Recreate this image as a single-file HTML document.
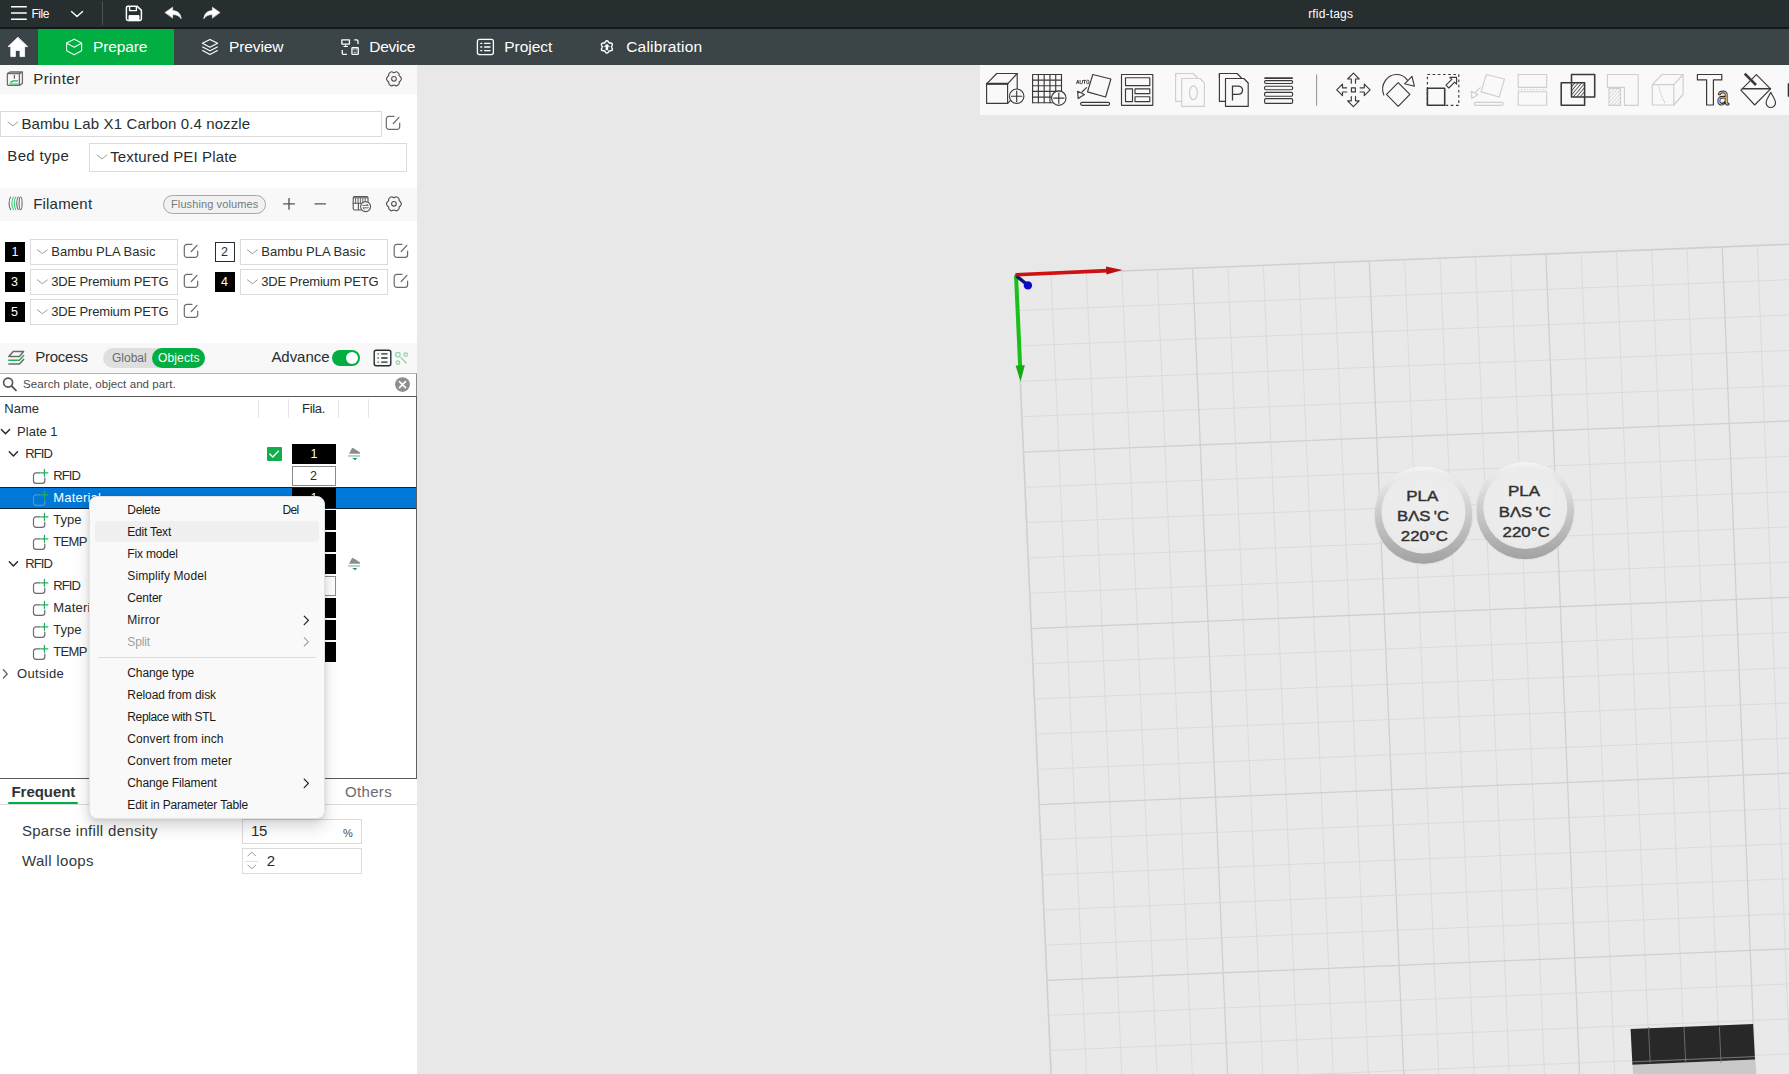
<!DOCTYPE html>
<html><head><meta charset="utf-8"><title>Bambu Studio</title>
<style>
html,body{margin:0;padding:0;background:#fff;}
body{width:1789px;height:1074px;overflow:hidden;font-family:"Liberation Sans",sans-serif;}
#root{position:relative;width:1789px;height:1074px;overflow:hidden;background:#fff;}
.a{position:absolute;box-sizing:border-box;}
.t{position:absolute;white-space:pre;font-family:"Liberation Sans",sans-serif;}
svg{position:absolute;left:0;top:0;overflow:visible;}
.combo{position:absolute;box-sizing:border-box;border:1px solid #DBDBDB;background:#fff;}
.blk{position:absolute;background:#000;}
.wbx{position:absolute;box-sizing:border-box;background:#fff;border:1px solid #8A8A8A;}

</style></head>
<body>
<div id="root">
<!-- title bar -->
<div class="a" style="left:0;top:0;width:1789px;height:28px;background:#262E30"></div>
<div class="a" style="left:0;top:27px;width:1789px;height:1.5px;background:#14181A"></div>
<!-- tab bar -->
<div class="a" style="left:0;top:28.5px;width:1789px;height:36.5px;background:#3B4446"></div>
<div class="a" style="left:38px;top:28.5px;width:136px;height:36.5px;background:#00AE42"></div>
<!-- left panel -->
<div class="a" style="left:0;top:65px;width:417px;height:1009px;background:#fff"></div>
<div class="a" style="left:0;top:65px;width:417px;height:29px;background:#F8F8F8"></div>
<div class="a" style="left:0;top:188px;width:417px;height:32.5px;background:#F8F8F8"></div>
<div class="a" style="left:0;top:342.5px;width:417px;height:31px;background:#F8F8F8"></div>
<!-- printer combo -->
<div class="combo" style="left:0;top:111px;width:381.5px;height:25.5px"></div>
<div class="combo" style="left:89px;top:142.5px;width:317.5px;height:29px"></div>
<!-- flushing volumes -->
<div class="a" style="left:163px;top:195px;width:103px;height:18.5px;border:1px solid #A8A8A8;border-radius:9.5px;background:#F1F1F1"></div>
<!-- filament combos -->
<div class="combo" style="left:30px;top:239px;width:147.5px;height:25.5px"></div>
<div class="combo" style="left:240px;top:239px;width:147.5px;height:25.5px"></div>
<div class="combo" style="left:30px;top:269px;width:147.5px;height:25.5px"></div>
<div class="combo" style="left:240px;top:269px;width:147.5px;height:25.5px"></div>
<div class="combo" style="left:30px;top:299px;width:147.5px;height:25.5px"></div>
<!-- colour boxes -->
<div class="blk" style="left:5px;top:242px;width:20px;height:20px"></div>
<div class="wbx" style="left:215px;top:242px;width:20px;height:20px;border-color:#262E30"></div>
<div class="blk" style="left:5px;top:272px;width:20px;height:20px"></div>
<div class="blk" style="left:215px;top:272px;width:20px;height:20px"></div>
<div class="blk" style="left:5px;top:302px;width:20px;height:20px"></div>
<!-- process toggle -->
<div class="a" style="left:102.5px;top:347.5px;width:102.5px;height:20.5px;border-radius:10.5px;background:#DFDFDF"></div>
<div class="a" style="left:152px;top:347.5px;width:53px;height:20.5px;border-radius:10.5px;background:#00AE42"></div>
<!-- advance switch -->
<div class="a" style="left:332px;top:350px;width:27.5px;height:15.5px;border-radius:8px;background:#00AE42"></div>
<div class="a" style="left:345.5px;top:351.5px;width:12.5px;height:12.5px;border-radius:6.5px;background:#fff"></div>
<!-- search box -->
<div class="a" style="left:0;top:373px;width:417px;height:23.5px;background:#fff;border-top:1px solid #B4B4B4;border-right:1px solid #8C8C8C"></div>
<!-- object list -->
<div class="a" style="left:0;top:395.5px;width:417px;height:383.5px;background:#fff;border-top:1.5px solid #5A5A5A;border-right:1px solid #606060;border-bottom:1px solid #5A5A5A"></div>
<div class="a" style="left:258px;top:399px;width:1px;height:19px;background:#E6E6E6"></div>
<div class="a" style="left:288px;top:399px;width:1px;height:19px;background:#E6E6E6"></div>
<div class="a" style="left:338px;top:399px;width:1px;height:19px;background:#E6E6E6"></div>
<div class="a" style="left:368px;top:399px;width:1px;height:19px;background:#E6E6E6"></div>
<!-- selected row -->
<div class="a" style="left:0;top:487px;width:416px;height:22px;background:#0078D7;border-top:1px solid #10243A;border-bottom:1px solid #10243A"></div>
<!-- filament column boxes -->
<div class="blk" style="left:292px;top:444px;width:44px;height:20px"></div>
<div class="wbx" style="left:292px;top:466px;width:44px;height:20px"></div>
<div class="blk" style="left:292px;top:488px;width:44px;height:20px"></div>
<div class="blk" style="left:292px;top:510px;width:44px;height:20px"></div>
<div class="blk" style="left:292px;top:532px;width:44px;height:20px"></div>
<div class="blk" style="left:292px;top:554px;width:44px;height:20px"></div>
<div class="wbx" style="left:292px;top:576px;width:44px;height:20px"></div>
<div class="blk" style="left:292px;top:598px;width:44px;height:20px"></div>
<div class="blk" style="left:292px;top:620px;width:44px;height:20px"></div>
<div class="blk" style="left:292px;top:642px;width:44px;height:20px"></div>
<!-- checkbox -->
<div class="a" style="left:266.5px;top:446.5px;width:15px;height:14.5px;background:#12AE4B;border-radius:1px"></div>
<!-- bottom tabs -->
<div class="a" style="left:0;top:803.5px;width:417px;height:1px;background:#DADADA"></div>
<div class="a" style="left:8px;top:801.5px;width:70px;height:2px;background:#00AE42;border-radius:1px"></div>
<!-- inputs -->
<div class="combo" style="left:242px;top:818.5px;width:120px;height:25.5px"></div>
<div class="combo" style="left:242px;top:848px;width:120px;height:25.5px"></div>

<div class="a" style="left:417px;top:65px;width:1372px;height:1009px;background:#E8E8E8"></div>
<svg width="1789" height="1074" viewBox="0 0 1789 1074" style="left:0;top:0">
<defs><clipPath id="vp"><rect x="417" y="65" width="1372" height="1009"/></clipPath>
<linearGradient id="ring" x1="0" y1="0" x2="0" y2="1"><stop offset="0" stop-color="#F6F6F6"/><stop offset="0.3" stop-color="#DADADA"/><stop offset="0.6" stop-color="#BEBEBE"/><stop offset="1" stop-color="#9A9A9A"/></linearGradient>
<radialGradient id="face" cx="0.5" cy="0.45" r="0.6"><stop offset="0" stop-color="#EFEFEF"/><stop offset="0.8" stop-color="#ECECEC"/><stop offset="1" stop-color="#E2E2E2"/></radialGradient>
</defs><g clip-path="url(#vp)">
<polygon points="1015.6,275.2 1919.4,239.1 1954.1,1137.8 1055.7,1176.6" fill="#E9E9E9"/>
<line x1="1015.6" y1="275.2" x2="1055.7" y2="1176.6" stroke="#CFCFCF" stroke-width="1.6"/>
<line x1="1015.6" y1="275.2" x2="1919.4" y2="239.1" stroke="#CFCFCF" stroke-width="1.6"/>
<line x1="1051.0" y1="273.8" x2="1090.9" y2="1175.1" stroke="#D9D9D9" stroke-width="0.9"/>
<line x1="1017.2" y1="310.6" x2="1920.7" y2="274.4" stroke="#D9D9D9" stroke-width="0.9"/>
<line x1="1086.4" y1="272.4" x2="1126.1" y2="1173.5" stroke="#D9D9D9" stroke-width="0.9"/>
<line x1="1018.8" y1="346.0" x2="1922.1" y2="309.7" stroke="#D9D9D9" stroke-width="0.9"/>
<line x1="1121.8" y1="271.0" x2="1161.3" y2="1172.0" stroke="#D9D9D9" stroke-width="0.9"/>
<line x1="1020.3" y1="381.4" x2="1923.4" y2="345.0" stroke="#D9D9D9" stroke-width="0.9"/>
<line x1="1157.2" y1="269.5" x2="1196.5" y2="1170.5" stroke="#D9D9D9" stroke-width="0.9"/>
<line x1="1021.9" y1="416.7" x2="1924.8" y2="380.2" stroke="#D9D9D9" stroke-width="0.9"/>
<line x1="1192.6" y1="268.1" x2="1231.7" y2="1169.0" stroke="#D0D0D0" stroke-width="1.3"/>
<line x1="1023.5" y1="452.1" x2="1926.2" y2="415.4" stroke="#D0D0D0" stroke-width="1.3"/>
<line x1="1227.9" y1="266.7" x2="1266.8" y2="1167.5" stroke="#D9D9D9" stroke-width="0.9"/>
<line x1="1025.1" y1="487.4" x2="1927.5" y2="450.7" stroke="#D9D9D9" stroke-width="0.9"/>
<line x1="1263.3" y1="265.3" x2="1302.0" y2="1165.9" stroke="#D9D9D9" stroke-width="0.9"/>
<line x1="1026.6" y1="522.7" x2="1928.9" y2="485.9" stroke="#D9D9D9" stroke-width="0.9"/>
<line x1="1298.7" y1="263.9" x2="1337.1" y2="1164.4" stroke="#D9D9D9" stroke-width="0.9"/>
<line x1="1028.2" y1="558.0" x2="1930.3" y2="521.1" stroke="#D9D9D9" stroke-width="0.9"/>
<line x1="1334.0" y1="262.5" x2="1372.2" y2="1162.9" stroke="#D9D9D9" stroke-width="0.9"/>
<line x1="1029.8" y1="593.3" x2="1931.6" y2="556.2" stroke="#D9D9D9" stroke-width="0.9"/>
<line x1="1369.3" y1="261.1" x2="1407.4" y2="1161.4" stroke="#D0D0D0" stroke-width="1.3"/>
<line x1="1031.3" y1="628.6" x2="1933.0" y2="591.4" stroke="#D0D0D0" stroke-width="1.3"/>
<line x1="1404.6" y1="259.7" x2="1442.5" y2="1159.9" stroke="#D9D9D9" stroke-width="0.9"/>
<line x1="1032.9" y1="663.8" x2="1934.3" y2="626.5" stroke="#D9D9D9" stroke-width="0.9"/>
<line x1="1440.0" y1="258.2" x2="1477.6" y2="1158.4" stroke="#D9D9D9" stroke-width="0.9"/>
<line x1="1034.5" y1="699.0" x2="1935.7" y2="661.7" stroke="#D9D9D9" stroke-width="0.9"/>
<line x1="1475.3" y1="256.8" x2="1512.7" y2="1156.8" stroke="#D9D9D9" stroke-width="0.9"/>
<line x1="1036.0" y1="734.2" x2="1937.1" y2="696.8" stroke="#D9D9D9" stroke-width="0.9"/>
<line x1="1510.6" y1="255.4" x2="1547.8" y2="1155.3" stroke="#D9D9D9" stroke-width="0.9"/>
<line x1="1037.6" y1="769.4" x2="1938.4" y2="731.9" stroke="#D9D9D9" stroke-width="0.9"/>
<line x1="1545.9" y1="254.0" x2="1582.8" y2="1153.8" stroke="#D0D0D0" stroke-width="1.3"/>
<line x1="1039.2" y1="804.6" x2="1939.8" y2="766.9" stroke="#D0D0D0" stroke-width="1.3"/>
<line x1="1581.1" y1="252.6" x2="1617.9" y2="1152.3" stroke="#D9D9D9" stroke-width="0.9"/>
<line x1="1040.7" y1="839.8" x2="1941.1" y2="802.0" stroke="#D9D9D9" stroke-width="0.9"/>
<line x1="1616.4" y1="251.2" x2="1653.0" y2="1150.8" stroke="#D9D9D9" stroke-width="0.9"/>
<line x1="1042.3" y1="874.9" x2="1942.5" y2="837.1" stroke="#D9D9D9" stroke-width="0.9"/>
<line x1="1651.7" y1="249.8" x2="1688.0" y2="1149.3" stroke="#D9D9D9" stroke-width="0.9"/>
<line x1="1043.9" y1="910.1" x2="1943.8" y2="872.1" stroke="#D9D9D9" stroke-width="0.9"/>
<line x1="1686.9" y1="248.4" x2="1723.1" y2="1147.8" stroke="#D9D9D9" stroke-width="0.9"/>
<line x1="1045.4" y1="945.2" x2="1945.2" y2="907.1" stroke="#D9D9D9" stroke-width="0.9"/>
<line x1="1722.2" y1="247.0" x2="1758.1" y2="1146.3" stroke="#D0D0D0" stroke-width="1.3"/>
<line x1="1047.0" y1="980.3" x2="1946.5" y2="942.1" stroke="#D0D0D0" stroke-width="1.3"/>
<line x1="1757.4" y1="245.6" x2="1793.1" y2="1144.7" stroke="#D9D9D9" stroke-width="0.9"/>
<line x1="1048.6" y1="1015.4" x2="1947.9" y2="977.1" stroke="#D9D9D9" stroke-width="0.9"/>
<line x1="1792.6" y1="244.2" x2="1828.1" y2="1143.2" stroke="#D9D9D9" stroke-width="0.9"/>
<line x1="1050.1" y1="1050.5" x2="1949.2" y2="1012.0" stroke="#D9D9D9" stroke-width="0.9"/>
<line x1="1827.8" y1="242.8" x2="1863.1" y2="1141.7" stroke="#D9D9D9" stroke-width="0.9"/>
<line x1="1051.7" y1="1085.5" x2="1950.6" y2="1047.0" stroke="#D9D9D9" stroke-width="0.9"/>
<line x1="1863.0" y1="241.3" x2="1898.1" y2="1140.2" stroke="#D9D9D9" stroke-width="0.9"/>
<line x1="1053.2" y1="1120.5" x2="1952.0" y2="1081.9" stroke="#D9D9D9" stroke-width="0.9"/>
<line x1="1898.2" y1="239.9" x2="1933.1" y2="1138.7" stroke="#D0D0D0" stroke-width="1.3"/>
<line x1="1054.8" y1="1155.6" x2="1953.3" y2="1116.8" stroke="#D0D0D0" stroke-width="1.3"/>
<polygon points="1632.4,1064.7 1755,1059.6 1757,1080 1633.5,1080" fill="#C9C9C9"/>
<polygon points="1630.6,1029.1 1753.1,1023.9 1755,1059.6 1632.4,1064.7" fill="#282828"/>
<line x1="1632" y1="1061.8" x2="1755" y2="1056.6" stroke="#8C8C8C" stroke-width="0.8"/>
<line x1="1648.5" y1="1027" x2="1650.2" y2="1063" stroke="#7A7A7A" stroke-width="0.8"/>
<line x1="1684.0" y1="1027" x2="1685.7" y2="1063" stroke="#7A7A7A" stroke-width="0.8"/>
<line x1="1719.4" y1="1027" x2="1721.0" y2="1063" stroke="#7A7A7A" stroke-width="0.8"/>
<g opacity="0.9"><circle cx="1423.5" cy="515.0" r="49.3" fill="url(#ring)"/>
<circle cx="1423.5" cy="515.0" r="49.3" fill="none" stroke="#E4E4E4" stroke-width="1"/>
<ellipse cx="1423.5" cy="512.3" rx="42" ry="41.2" fill="url(#face)"/>
<text x="1422.2" y="500.5" font-size="15" font-family='"Liberation Sans", sans-serif' font-weight="400" fill="#1C1C1C" stroke="#1C1C1C" stroke-width="0.45" text-anchor="middle" textLength="32" lengthAdjust="spacingAndGlyphs">PLA</text>
<text x="1423.0" y="521.0" font-size="15" font-family='"Liberation Sans", sans-serif' font-weight="400" fill="#1C1C1C" stroke="#1C1C1C" stroke-width="0.45" text-anchor="middle" textLength="52" lengthAdjust="spacingAndGlyphs">B&#923;S&#8201;'C</text>
<text x="1424.3" y="541.0" font-size="15" font-family='"Liberation Sans", sans-serif' font-weight="400" fill="#1C1C1C" stroke="#1C1C1C" stroke-width="0.45" text-anchor="middle" textLength="47" lengthAdjust="spacingAndGlyphs">220&#176;C</text></g>
<g opacity="0.9"><circle cx="1525.3" cy="510.5" r="49.3" fill="url(#ring)"/>
<circle cx="1525.3" cy="510.5" r="49.3" fill="none" stroke="#E4E4E4" stroke-width="1"/>
<ellipse cx="1525.3" cy="507.8" rx="42" ry="41.2" fill="url(#face)"/>
<text x="1524.0" y="496.0" font-size="15" font-family='"Liberation Sans", sans-serif' font-weight="400" fill="#1C1C1C" stroke="#1C1C1C" stroke-width="0.45" text-anchor="middle" textLength="32" lengthAdjust="spacingAndGlyphs">PLA</text>
<text x="1524.8" y="516.5" font-size="15" font-family='"Liberation Sans", sans-serif' font-weight="400" fill="#1C1C1C" stroke="#1C1C1C" stroke-width="0.45" text-anchor="middle" textLength="52" lengthAdjust="spacingAndGlyphs">B&#923;S&#8201;'C</text>
<text x="1526.1" y="536.5" font-size="15" font-family='"Liberation Sans", sans-serif' font-weight="400" fill="#1C1C1C" stroke="#1C1C1C" stroke-width="0.45" text-anchor="middle" textLength="47" lengthAdjust="spacingAndGlyphs">220&#176;C</text></g>
<line x1="1016" y1="275" x2="1020.2" y2="367" stroke="#18C018" stroke-width="4"/>
<polygon points="1015.6,365.5 1024.8,365.2 1020.6,381.5" fill="#14A814"/>
<line x1="1016.5" y1="276" x2="1027" y2="284.5" stroke="#10107A" stroke-width="3.5"/>
<circle cx="1027.9" cy="285.4" r="4.2" fill="#0A0AC8"/>
<line x1="1015.4" y1="274.8" x2="1108" y2="270.6" stroke="#CC1212" stroke-width="3.6"/>
<polygon points="1106,266.6 1122.5,270 1106.4,274.6" fill="#B81010"/>
</g></svg>
<div class="a" style="left:980px;top:65px;width:809px;height:49.6px;background:#F9F9F9"></div>
<svg id="icons" width="1789" height="1074" viewBox="0 0 1789 1074" fill="none" stroke-linecap="round" stroke-linejoin="round">
<!-- ===== title bar ===== -->
<g stroke="#fff" stroke-width="1.6" stroke-linecap="butt">
<path d="M11 6.7H26.8M11 13H26.8M11 19.2H26.8"/>
</g>
<path d="M71.5 11.6L77 16.6L82.6 11.6" stroke="#fff" stroke-width="1.4"/>
<path d="M102.5 2V25" stroke="#4A5254" stroke-width="1"/>
<!-- save -->
<path d="M128 6.2H137.2L141.4 10.4V18.8A1.6 1.6 0 0 1 139.8 20.4H128A1.6 1.6 0 0 1 126.4 18.8V7.8A1.6 1.6 0 0 1 128 6.2Z" stroke="#fff" stroke-width="1.5"/>
<path d="M129.6 6.6V10.6H136.4V6.6" stroke="#fff" stroke-width="1.4"/>
<path d="M129 20.2V15.6H139V20.2Z" fill="#fff" stroke="#fff" stroke-width="1"/>
<!-- undo -->
<path d="M165.2 12.4L172.6 7.2V10.6C177.6 10.8 180.8 13.8 181.2 18.8C179.2 16 176.6 14.6 172.6 14.6V17.8Z" fill="#fff" stroke="#fff" stroke-width="0.6"/>
<!-- redo -->
<path d="M219.8 12.4L212.4 7.2V10.6C207.4 10.8 204.2 13.8 203.8 18.8C205.800 16 208.4 14.6 212.4 14.6V17.8Z" fill="#fff" stroke="#fff" stroke-width="0.6"/>
<!-- ===== tab bar ===== -->
<!-- home -->
<path d="M17.7 37.4L8 46.6H10.8V56.6H15.4V50.4H20V56.6H24.6V46.6H27.4Z" fill="#fff" stroke="#fff" stroke-width="0.8"/>
<!-- prepare cube -->
<g stroke="#E8FFE8" stroke-width="1.15">
<path d="M74.2 39.2L81.6 43V50.8L74.2 54.8L66.6 50.8V43Z"/>
<path d="M66.8 43.2L74.2 47.2L81.4 43.2"/>
</g>
<!-- preview layers -->
<g stroke="#fff" stroke-width="1.15">
<path d="M210 39.4L217.6 43.2L210 47.2L202.4 43.2Z"/>
<path d="M202.600 47L210 50.800L217.400 47"/>
<path d="M202.600 50.6L210 54.400L217.400 50.6"/>
</g>
<!-- device -->
<g stroke="#fff" stroke-width="1.3" stroke-linecap="butt" stroke-linejoin="miter">
<rect x="341.850" y="39.850" width="7.600" height="4.300" rx="0.400"/>
<path d="M345.650 44.400V46.400M343.500 46.500H347.900" stroke-width="1.1"/>
<path d="M354.200 39.900H356.600A1.400 1.400 0 0 1 358 41.300V43.900"/>
<path d="M342.300 49.900V53.600A0.800 0.800 0 0 0 343.100 54.400H346.900"/>
<rect x="351.950" y="47.750" width="6.300" height="6.600" rx="0.600"/>
<path d="M353.900 48.800V50.400M356.300 48.800V50.400M353.700 52.300H356.500" stroke-width="0.8"/>
</g>
<!-- project -->
<g stroke="#fff" stroke-width="1.3">
<rect x="477.400" y="39.400" width="16" height="15.200" rx="2"/>
<path d="M484.600 43.400H490M484.600 47H490M484.600 50.600H490M480.800 43.400H481.800M480.800 47H481.800M480.800 50.600H481.800"/>
</g>
<!-- calibration -->
<path d="M611.55 46.90 L611.60 46.59 L611.73 46.26 L611.91 45.90 L612.12 45.50 L612.29 45.07 L612.38 44.63 L612.36 44.21 L612.23 43.82 L611.97 43.51 L611.60 43.29 L611.18 43.15 L610.72 43.08 L610.27 43.06 L609.86 43.04 L609.52 42.99 L609.23 42.87 L608.98 42.68 L608.76 42.40 L608.54 42.06 L608.30 41.68 L608.01 41.32 L607.67 41.02 L607.30 40.82 L606.90 40.75 L606.50 40.82 L606.13 41.02 L605.79 41.32 L605.50 41.68 L605.26 42.06 L605.04 42.40 L604.82 42.68 L604.57 42.87 L604.28 42.99 L603.94 43.04 L603.53 43.06 L603.08 43.08 L602.62 43.15 L602.20 43.29 L601.83 43.51 L601.57 43.82 L601.44 44.21 L601.42 44.63 L601.51 45.07 L601.68 45.50 L601.89 45.90 L602.07 46.26 L602.20 46.59 L602.25 46.90 L602.20 47.21 L602.07 47.54 L601.89 47.90 L601.68 48.30 L601.51 48.73 L601.42 49.17 L601.44 49.59 L601.57 49.97 L601.83 50.29 L602.20 50.51 L602.62 50.65 L603.08 50.72 L603.53 50.74 L603.94 50.76 L604.28 50.81 L604.57 50.93 L604.82 51.12 L605.04 51.40 L605.26 51.74 L605.50 52.12 L605.79 52.48 L606.13 52.78 L606.50 52.98 L606.90 53.05 L607.30 52.98 L607.67 52.78 L608.01 52.48 L608.30 52.12 L608.54 51.74 L608.76 51.40 L608.98 51.12 L609.23 50.93 L609.52 50.81 L609.86 50.76 L610.27 50.74 L610.72 50.72 L611.18 50.65 L611.60 50.51 L611.97 50.29 L612.23 49.98 L612.36 49.59 L612.38 49.17 L612.29 48.73 L612.12 48.30 L611.91 47.90 L611.73 47.54 L611.60 47.21 L611.55 46.90Z" stroke="#fff" stroke-width="1.45"/>
<path d="M606.9 44L609.8 46.800H608V50H605.800V46.800H604Z" fill="#fff" stroke="#fff" stroke-width="0.3"/>
</svg>

<svg id="icons2" width="1789" height="1074" viewBox="0 0 1789 1074" fill="none" stroke-linecap="round" stroke-linejoin="round">
<g stroke="#6B6B6B" stroke-width="1.3">
<path d="M7.4 73.600H19.400V85.400H8.400A1 1 0 0 1 7.400 84.400Z"/>
<path d="M7.600 73.400L10 72H22.400V83.200L19.600 85.400M19.400 73.600L22.300 72.100"/>
<path d="M14.400 75.400V78.200"/>
</g>
<path d="M10.300 82.500L13.300 80.900H18" stroke="#1DB254" stroke-width="1.400" stroke-linecap="butt"/>
<path d="M9.800 84H18.200" stroke="#1DB254" stroke-width="0.9"/>
<path d="M401.45 78.85C401.45 78.09 400.58 77.10 400.20 76.58C399.82 76.05 399.36 76.13 399.18 75.71C399.00 75.29 399.36 74.59 399.11 74.04C398.86 73.49 398.13 72.78 397.68 72.40C397.22 72.02 396.83 71.78 396.39 71.76C395.95 71.74 395.45 72.14 395.05 72.29C394.64 72.44 394.32 72.65 393.95 72.65C393.58 72.65 393.26 72.44 392.85 72.29C392.45 72.14 391.95 71.74 391.51 71.76C391.07 71.78 390.68 72.02 390.22 72.40C389.77 72.78 389.04 73.49 388.79 74.04C388.54 74.59 388.90 75.29 388.72 75.71C388.54 76.13 388.08 76.05 387.70 76.58C387.32 77.10 386.45 78.09 386.45 78.85C386.45 79.61 387.32 80.60 387.70 81.12C388.08 81.65 388.54 81.57 388.72 81.99C388.90 82.41 388.54 83.11 388.79 83.66C389.04 84.21 389.77 84.92 390.22 85.30C390.68 85.68 391.07 85.92 391.51 85.94C391.95 85.96 392.45 85.56 392.85 85.41C393.26 85.26 393.58 85.05 393.95 85.05C394.32 85.05 394.64 85.26 395.05 85.41C395.45 85.56 395.95 85.96 396.39 85.94C396.83 85.92 397.22 85.68 397.68 85.30C398.13 84.92 398.86 84.21 399.11 83.66C399.36 83.11 399.00 82.41 399.18 81.99C399.36 81.57 399.82 81.65 400.20 81.12C400.58 80.60 401.45 79.61 401.45 78.85Z" stroke="#505050" stroke-width="1.15"/><circle cx="393.95" cy="78.85" r="2.35" stroke="#505050" stroke-width="1.1"/>
<path d="M401.44 203.80C401.44 203.04 400.57 202.05 400.19 201.53C399.81 201.00 399.35 201.08 399.17 200.66C398.99 200.24 399.35 199.54 399.10 198.99C398.85 198.44 398.12 197.73 397.67 197.35C397.21 196.97 396.82 196.73 396.38 196.71C395.94 196.69 395.44 197.09 395.04 197.24C394.63 197.39 394.31 197.60 393.94 197.60C393.57 197.60 393.25 197.39 392.84 197.24C392.44 197.09 391.94 196.69 391.50 196.71C391.06 196.73 390.67 196.97 390.21 197.35C389.76 197.73 389.03 198.44 388.78 198.99C388.53 199.54 388.89 200.24 388.71 200.66C388.53 201.08 388.07 201.00 387.69 201.53C387.31 202.05 386.44 203.04 386.44 203.80C386.44 204.56 387.31 205.55 387.69 206.07C388.07 206.60 388.53 206.52 388.71 206.94C388.89 207.36 388.53 208.06 388.78 208.61C389.03 209.16 389.76 209.87 390.21 210.25C390.67 210.63 391.06 210.87 391.50 210.89C391.94 210.91 392.44 210.51 392.84 210.36C393.25 210.21 393.57 210.00 393.94 210.00C394.31 210.00 394.63 210.21 395.04 210.36C395.44 210.51 395.94 210.91 396.38 210.89C396.82 210.87 397.21 210.63 397.67 210.25C398.12 209.87 398.85 209.16 399.10 208.61C399.35 208.06 398.99 207.36 399.17 206.94C399.35 206.52 399.81 206.60 400.19 206.07C400.57 205.55 401.44 204.56 401.44 203.80Z" stroke="#505050" stroke-width="1.15"/><circle cx="393.94" cy="203.80" r="2.35" stroke="#505050" stroke-width="1.1"/>
<path d="M8.0 122.0L12.9 125.8L17.8 122.0" stroke="#9C9C9C" stroke-width="1.0"/>
<path d="M97.0 155.1L101.9 158.9L106.8 155.1" stroke="#9C9C9C" stroke-width="1.0"/>
<path d="M37.5 249.9L42.4 253.7L47.3 249.9" stroke="#9C9C9C" stroke-width="1.0"/>
<path d="M37.5 279.9L42.4 283.7L47.3 279.9" stroke="#9C9C9C" stroke-width="1.0"/>
<path d="M37.5 309.9L42.4 313.7L47.3 309.9" stroke="#9C9C9C" stroke-width="1.0"/>
<path d="M247.5 249.9L252.4 253.7L257.3 249.9" stroke="#9C9C9C" stroke-width="1.0"/>
<path d="M247.5 279.9L252.4 283.7L257.3 279.9" stroke="#9C9C9C" stroke-width="1.0"/>
<g stroke="#6B6B6B" stroke-width="1.2"><path d="M394.0 116.3H388.9A2.600 2.600 0 0 0 386.3 118.9V126.8A2.600 2.600 0 0 0 388.9 129.4H397.1A2.600 2.600 0 0 0 399.7 126.8V123.0"/><path d="M393.3 123.5L399.0 117.3"/></g>
<g stroke="#6B6B6B" stroke-width="1.2"><path d="M192.0 244.3H186.9A2.600 2.600 0 0 0 184.3 246.9V254.8A2.600 2.600 0 0 0 186.9 257.4H195.1A2.600 2.600 0 0 0 197.7 254.8V251.0"/><path d="M191.3 251.5L197.0 245.3"/></g>
<g stroke="#6B6B6B" stroke-width="1.2"><path d="M192.0 274.3H186.9A2.600 2.600 0 0 0 184.3 276.9V284.8A2.600 2.600 0 0 0 186.9 287.4H195.1A2.600 2.600 0 0 0 197.7 284.8V281.0"/><path d="M191.3 281.5L197.0 275.3"/></g>
<g stroke="#6B6B6B" stroke-width="1.2"><path d="M192.0 304.3H186.9A2.600 2.600 0 0 0 184.3 306.9V314.8A2.600 2.600 0 0 0 186.9 317.4H195.1A2.600 2.600 0 0 0 197.7 314.8V311.0"/><path d="M191.3 311.5L197.0 305.3"/></g>
<g stroke="#6B6B6B" stroke-width="1.2"><path d="M401.9 244.3H396.8A2.600 2.600 0 0 0 394.2 246.9V254.8A2.600 2.600 0 0 0 396.8 257.4H405.0A2.600 2.600 0 0 0 407.6 254.8V251.0"/><path d="M401.2 251.5L406.9 245.3"/></g>
<g stroke="#6B6B6B" stroke-width="1.2"><path d="M401.9 274.3H396.8A2.600 2.600 0 0 0 394.2 276.9V284.8A2.600 2.600 0 0 0 396.8 287.4H405.0A2.600 2.600 0 0 0 407.6 284.8V281.0"/><path d="M401.2 281.5L406.9 275.3"/></g>
<g stroke-width="1.1">
<path d="M10.6 197C8.600 199.500 8.600 207 10.600 209.600" stroke="#6B6B6B"/>
<path d="M13.400 197C11.400 199.500 11.400 207 13.400 209.600" stroke="#3CC878"/>
<path d="M15.800 197C13.800 199.500 13.800 207 15.800 209.600" stroke="#3CC878"/>
<path d="M18.200 197C16.200 199.500 16.200 207 18.200 209.600" stroke="#6B6B6B"/>
<ellipse cx="20.600" cy="203.300" rx="1.500" ry="6.300" stroke="#6B6B6B"/>
</g>
<path d="M283.1 203.800H294.9M289 197.900V209.700M314.500 203.800H325.900" stroke="#555" stroke-width="1.35" stroke-linecap="butt"/>
<g stroke="#555" stroke-width="1.1">
<path d="M354.600 196.600H366.600A1.400 1.400 0 0 1 368 198V203.200H353.200V198A1.400 1.400 0 0 1 354.600 196.600Z"/>
<path d="M355.600 198.400V203M358 198.400V203M360.400 198.400V203M362.800 198.400V203M365.200 198.400V203M353.400 197.800H367.800" stroke-width="0.9"/>
<path d="M353.200 203.200V208.600A1.400 1.400 0 0 0 354.600 210H361M358.400 203.400V209.800"/>
<circle cx="365.600" cy="206.600" r="5" fill="#F8F8F8"/>
<path d="M362.800 205.400H368.200L366.800 204M368.400 207.800H363L364.400 209.200" stroke-width="0.9"/>
</g>
<g stroke-width="1.5" stroke-linejoin="round">
<path d="M8.800 356.600L13.200 351.600H23.600L19.400 356.600Z" stroke="#6B6B6B"/>
<path d="M8.800 360.300H19.400L23.600 355.600" stroke="#1DB254"/>
<path d="M8.800 364.100H19.400L23.600 359.400" stroke="#6B6B6B"/>
</g>
<rect x="374.200" y="350.300" width="16.600" height="15.400" rx="2" stroke="#262E30" stroke-width="1.4"/>
<path d="M381.200 353.900H387.500M381.200 358H387.500M381.200 362.100H387.500" stroke="#262E30" stroke-width="1.3" stroke-linecap="butt"/>
<path d="M377.600 353.900H378.700M377.600 358H378.700M377.600 362.100H378.700" stroke="#262E30" stroke-width="1.300" stroke-linecap="butt"/>
<g stroke="#8ED1A8" stroke-width="1.2"><circle cx="397.900" cy="354.600" r="2.300"/><circle cx="405.600" cy="354.600" r="1.800"/><circle cx="397.900" cy="362.600" r="1.800"/><path d="M400.800 357.300L406.200 363"/></g>
<circle cx="8.1" cy="382.600" r="4.500" stroke="#555" stroke-width="1.600"/><path d="M11.500 386L16 390.300" stroke="#555" stroke-width="1.800"/>
<circle cx="402.500" cy="384.600" r="7.400" fill="#8E8E8E"/><path d="M399.500 381.600L405.500 387.600M405.500 381.600L399.500 387.600" stroke="#fff" stroke-width="1.600"/>
<path d="M1.4 429.6L5.5 433.8L9.6 429.6" stroke="#262E30" stroke-width="1.500"/>
<path d="M9.3 451.8L13.4 456.0L17.5 451.8" stroke="#262E30" stroke-width="1.500"/>
<path d="M9.3 561.8L13.4 566.0L17.5 561.8" stroke="#262E30" stroke-width="1.500"/>
<path d="M3.400 669.800L7.200 673.900L3.400 678" stroke="#6B6B6B" stroke-width="1.400"/>
<path d="M40 472.8H36.100A2.600 2.600 0 0 0 33.500 475.4V480.7A2.600 2.600 0 0 0 36.100 483.3H42.200A2.600 2.600 0 0 0 44.800 480.7V478.0" stroke="#6B6B6B" stroke-width="1.200"/><path d="M40.900 472.8H47.900M44.400 469.3V476.3" stroke="#1DB254" stroke-width="1.200"/>
<path d="M40 516.8H36.100A2.600 2.600 0 0 0 33.500 519.4V524.7A2.600 2.600 0 0 0 36.100 527.3H42.200A2.600 2.600 0 0 0 44.800 524.7V522.0" stroke="#6B6B6B" stroke-width="1.200"/><path d="M40.900 516.8H47.900M44.400 513.3V520.3" stroke="#1DB254" stroke-width="1.200"/>
<path d="M40 538.8H36.100A2.600 2.600 0 0 0 33.500 541.4V546.7A2.600 2.600 0 0 0 36.100 549.3H42.200A2.600 2.600 0 0 0 44.800 546.7V544.0" stroke="#6B6B6B" stroke-width="1.200"/><path d="M40.900 538.8H47.900M44.400 535.3V542.3" stroke="#1DB254" stroke-width="1.200"/>
<path d="M40 582.8H36.100A2.600 2.600 0 0 0 33.500 585.4V590.7A2.600 2.600 0 0 0 36.100 593.3H42.200A2.600 2.600 0 0 0 44.800 590.7V588.0" stroke="#6B6B6B" stroke-width="1.200"/><path d="M40.900 582.8H47.900M44.400 579.3V586.3" stroke="#1DB254" stroke-width="1.200"/>
<path d="M40 604.8H36.100A2.600 2.600 0 0 0 33.500 607.4V612.7A2.600 2.600 0 0 0 36.100 615.3H42.200A2.600 2.600 0 0 0 44.800 612.7V610.0" stroke="#6B6B6B" stroke-width="1.200"/><path d="M40.900 604.8H47.900M44.400 601.3V608.3" stroke="#1DB254" stroke-width="1.200"/>
<path d="M40 626.8H36.100A2.600 2.600 0 0 0 33.500 629.4V634.7A2.600 2.600 0 0 0 36.100 637.3H42.200A2.600 2.600 0 0 0 44.800 634.7V632.0" stroke="#6B6B6B" stroke-width="1.200"/><path d="M40.900 626.8H47.900M44.400 623.3V630.3" stroke="#1DB254" stroke-width="1.200"/>
<path d="M40 648.8H36.100A2.600 2.600 0 0 0 33.500 651.4V656.7A2.600 2.600 0 0 0 36.100 659.3H42.200A2.600 2.600 0 0 0 44.800 656.7V654.0" stroke="#6B6B6B" stroke-width="1.200"/><path d="M40.900 648.8H47.900M44.400 645.3V652.3" stroke="#1DB254" stroke-width="1.200"/>
<path d="M40 494.8H36.100A2.600 2.600 0 0 0 33.500 497.4V502.7A2.600 2.600 0 0 0 36.100 505.3H42.200A2.600 2.600 0 0 0 44.800 502.7V500.0" stroke="#5E8FC4" stroke-width="1.200"/><path d="M40.900 494.8H47.900M44.400 491.3V498.3" stroke="#1DB254" stroke-width="1.200"/>
<path d="M269.800 454L272.800 457L278.400 451.200" stroke="#fff" stroke-width="1.300"/>
<path d="M349 453.7L352.100 448.1L353.500 448.3L359.900 452.3V453.7Z" fill="#8C8C8C"/><rect x="348" y="455.1" width="12" height="1.700" fill="#C2C2C2"/><path d="M352.100 457.9H357L355.400 460.2Z" fill="#00A050"/>
<path d="M349 563.7L352.100 558.1L353.500 558.3L359.900 562.3V563.7Z" fill="#8C8C8C"/><rect x="348" y="565.1" width="12" height="1.700" fill="#C2C2C2"/><path d="M352.100 567.9H357L355.400 570.2Z" fill="#00A050"/>
<path d="M247.900 855.800L251.800 852.300L255.700 855.800M247.900 865.200L251.800 868.700L255.700 865.200" stroke="#9C9C9C" stroke-width="1"/>
<path d="M245.200 861.400H257.700" stroke="#DEDEDE" stroke-width="1"/>
</svg>
<svg id="icons3" width="1789" height="1074" viewBox="0 0 1789 1074" fill="none" stroke-linecap="round" stroke-linejoin="round">
<g stroke="#3A3A3A" stroke-width="1.15" >
<path d="M986.600 83.800H1007.600V103.400H986.600Z"/>
<path d="M986.600 83.800L996.700 73.500H1017.200L1007.600 83.800"/>
<path d="M1017.200 73.500V89M1007.600 103.400L1010.800 100.200"/>
<path d="M986.800 83.800H1007.600" stroke-width="1.9"/>
<circle cx="1016.700" cy="96.200" r="7.200" fill="#F9F9F9"/><path d="M1011.500 96.200H1021.900M1016.700 91V101.400"/>
</g>
<g stroke="#3A3A3A" stroke-width="1.15" >
<path d="M1032.60 74.50V102.70M1032.60 74.50H1061.50"/>
<path d="M1038.38 74.50V102.70M1032.60 80.14H1061.50"/>
<path d="M1044.16 74.50V102.70M1032.60 85.78H1061.50"/>
<path d="M1049.94 74.50V102.70M1032.60 91.42H1061.50"/>
<path d="M1055.72 74.50V102.70M1032.60 97.06H1061.50"/>
<path d="M1061.50 74.50V102.70M1032.60 102.70H1061.50"/>
<circle cx="1058.800" cy="98.100" r="7.200" fill="#F9F9F9"/><path d="M1053.600 98.100H1064M1058.800 92.900V103.300"/>
</g>
<g stroke="#3A3A3A" stroke-width="1.15" ><path d="M1092.8 74.500L1110.9 79L1105.6 97L1087.5 91.900Z"/><path d="M1086.6 87.600L1082.0 92"/><path d="M1078.2 98.600L1077.6 91.200L1084.4 94.400Z"/><rect x="1080.6" y="102.400" width="29" height="2.900" rx="1.450"/></g><g stroke="#333" stroke-width="0.85" stroke-linecap="butt" stroke-linejoin="miter"><path d="M1076.400 83.900L1077.800 80L1079.200 83.900M1076.900 82.700H1078.700"/><path d="M1080.100 80V82.700Q1080.100 83.800 1081.300 83.800Q1082.500 83.800 1082.500 82.700V80"/><path d="M1083.100 80.400H1085.900M1084.500 80.400V83.900"/><ellipse cx="1087.800" cy="81.950" rx="1.250" ry="1.850"/></g>
<g stroke="#3A3A3A" stroke-width="1.15" >
<rect x="1121.500" y="74.500" width="31.300" height="30.800"/>
<rect x="1125.500" y="77.700" width="24.300" height="7.900"/>
<rect x="1125.500" y="88.800" width="7" height="12.800"/>
<rect x="1135" y="88.800" width="14.800" height="4.800"/>
<rect x="1135" y="96.700" width="14.800" height="4.900"/>
</g>
<g stroke="#CFCFCF" stroke-width="1.15" ><path d="M1175.6 78V73.500H1193.4L1197.6 78"/><path d="M1175.6 73.500V101.300H1181.7"/><path d="M1181.7 78.500H1200.0L1204.4 83V106.400H1181.7Z"/></g>
<ellipse cx="1193.400" cy="92.800" rx="3.900" ry="6.900" stroke="#CFCFCF" stroke-width="1.250"/>
<g stroke="#3A3A3A" stroke-width="1.15" ><path d="M1219.4 78V73.500H1237.2L1241.4 78"/><path d="M1219.4 73.500V101.300H1225.5"/><path d="M1225.5 78.500H1243.8L1248.2 83V106.400H1225.5Z"/></g>
<path d="M1232.500 100.600V86.200H1237.600C1244.200 86.200 1244.200 94.400 1237.600 94.400H1232.500" stroke="#3A3A3A" stroke-width="1.300" stroke-linecap="butt"/>
<g stroke="#3A3A3A" stroke-width="1.15" >
<path d="M1265 78.100H1292.200" stroke-width="1.700"/>
<rect x="1264.600" y="80.6" width="28" height="2.9" rx="1.200"/>
<rect x="1264.600" y="86.2" width="28" height="3.6" rx="1.200"/>
<rect x="1264.600" y="92.3" width="28" height="3.9" rx="1.200"/>
<rect x="1264.600" y="98.6" width="28" height="4.8" rx="1.200"/>
</g>
<path d="M1316.600 74.700V105.300" stroke="#9A9A9A" stroke-width="1.100"/>
<g stroke="#3A3A3A" stroke-width="1.15" >
<rect x="1351.4" y="87.9" width="4" height="4"/>
<path transform="rotate(0 1353.4 89.9)" d="M1351.3 83.2V79.0H1347.6L1353.4 73.2L1359.2 79.0H1355.5V83.2"/>
<path transform="rotate(90 1353.4 89.9)" d="M1351.3 83.2V79.0H1347.6L1353.4 73.2L1359.2 79.0H1355.5V83.2"/>
<path transform="rotate(180 1353.4 89.9)" d="M1351.3 83.2V79.0H1347.6L1353.4 73.2L1359.2 79.0H1355.5V83.2"/>
<path transform="rotate(270 1353.4 89.9)" d="M1351.3 83.2V79.0H1347.6L1353.4 73.2L1359.2 79.0H1355.5V83.2"/>
</g>
<g stroke="#3A3A3A" stroke-width="1.15" >
<path d="M1398.200 82.700L1409.900 94.400L1398.200 106.400L1386.500 94.400Z"/>
<path d="M1383.800 95C1379.500 84 1388 74.500 1396.500 74.500C1401.500 74.500 1405 76.800 1407.400 80.200"/>
<path d="M1404.600 83.800L1412 76.300L1414.400 86.200Z"/>
</g>
<g stroke="#3A3A3A" stroke-width="1.15" >
<rect x="1427.400" y="74.500" width="31.400" height="30.800" stroke-dasharray="2.600 2.600" stroke-linecap="butt"/>
<rect x="1427.400" y="88.300" width="17.300" height="17" stroke-width="1.600" fill="#F9F9F9"/>
<path d="M1446 85.200L1451.800 79.400L1449.800 77.400H1456.600V84.200L1454.600 82.200L1448.800 88Z" stroke-width="1.100"/>
</g>
<g stroke="#CFCFCF" stroke-width="1.15" ><path d="M1486.4 74.500L1504.5 79L1499.2 97L1481.1 91.900Z"/><path d="M1480.2 87.600L1475.6 92"/><path d="M1471.8 98.600L1471.2 91.200L1478.0 94.400Z"/><rect x="1474.2" y="102.400" width="29" height="2.900" rx="1.450"/></g>
<g stroke="#CFCFCF" stroke-width="1.15" >
<rect x="1518.200" y="74.500" width="28.500" height="12.800"/><rect x="1518.200" y="91.700" width="28.500" height="13.600"/>
<path d="M1518.200 89.600H1546.700" stroke-dasharray="1.200 1.800" stroke-linecap="butt"/>
</g>
<defs><pattern id="hat" width="2.600" height="2.600" patternUnits="userSpaceOnUse" patternTransform="rotate(-50)"><path d="M0 1.300H2.600" stroke="#444" stroke-width="0.800"/></pattern><pattern id="hatL" width="2.600" height="2.600" patternUnits="userSpaceOnUse" patternTransform="rotate(-50)"><path d="M0 1.300H2.600" stroke="#D2D2D2" stroke-width="0.800"/></pattern></defs>
<g stroke="#3A3A3A" stroke-width="1.55" >
<rect x="1571.500" y="82.700" width="13.100" height="14.300" fill="url(#hat)" stroke="none"/>
<rect x="1571.500" y="74.500" width="23.200" height="22.500"/><rect x="1561.200" y="82.700" width="23.400" height="22.600"/>
</g>
<g stroke="#CFCFCF" stroke-width="1.15" >
<path d="M1607.400 74.500H1638.200V105.300H1624.400V87.300H1607.400Z"/>
<rect x="1609" y="88.500" width="11.500" height="16.800" fill="url(#hatL)"/>
</g>
<g stroke="#CFCFCF" stroke-width="1.15" >
<path d="M1652.300 84.600H1673.800V105H1652.300Z"/><path d="M1652.300 84.600L1662.100 74.500H1683.100L1673.800 84.600M1683.100 74.500V94.500L1673.800 105"/>
<path d="M1658.900 86L1660 92L1664.800 103" stroke-dasharray="1 1.800"/>
</g>
<g stroke="#3A3A3A" stroke-width="1.20" >
<path d="M1697.400 74.500H1721.800V79.900H1713.400V105H1706.600V79.900H1697.400Z"/>
</g>
<text x="1716.900" y="105.2" font-family='"Liberation Sans", sans-serif' font-size="25" font-weight="400" fill="#F9F9F9" stroke="#2E2E2E" stroke-width="1.1" textLength="11.800" lengthAdjust="spacingAndGlyphs">a</text>
<g stroke="#3A3A3A" stroke-width="1.15" >
<path d="M1756.400 74.700L1770.600 88.800L1754.700 105L1740.900 90.200Z"/>
<path d="M1742.500 88.700H1770.400" stroke-width="1.600"/>
<path d="M1744.700 73.700L1756 85" stroke-width="2.600" stroke-linecap="butt"/>
<path d="M1770.800 92.300C1768.500 97 1766.100 100 1766.100 102.800A4.700 4.700 0 0 0 1775.500 102.800C1775.500 100 1773.100 97 1770.800 92.300Z"/>
</g>
<rect x="1787.700" y="83.300" width="2" height="13.400" fill="#2E2E2E"/>
</svg>
<span class="t" style="left:31.5px;top:6px;height:17px;line-height:17px;font-size:12px;letter-spacing:-0.461px;color:#fff;font-weight:400">File</span>
<span class="t" style="left:1308.2px;top:6px;height:17px;line-height:17px;font-size:12px;letter-spacing:0.171px;color:#fff;font-weight:400">rfid-tags</span>
<span class="t" style="left:93.1px;top:36px;height:22px;line-height:22px;font-size:15.5px;letter-spacing:-0.165px;color:#fff;font-weight:400">Prepare</span>
<span class="t" style="left:228.9px;top:36px;height:22px;line-height:22px;font-size:15.5px;letter-spacing:-0.077px;color:#fff;font-weight:400">Preview</span>
<span class="t" style="left:369.2px;top:36px;height:22px;line-height:22px;font-size:15.5px;letter-spacing:-0.232px;color:#fff;font-weight:400">Device</span>
<span class="t" style="left:504.2px;top:36px;height:22px;line-height:22px;font-size:15.5px;letter-spacing:-0.021px;color:#fff;font-weight:400">Project</span>
<span class="t" style="left:626.2px;top:36px;height:22px;line-height:22px;font-size:15.5px;letter-spacing:0.190px;color:#fff;font-weight:400">Calibration</span>
<span class="t" style="left:33.2px;top:68px;height:21px;line-height:21px;font-size:15px;letter-spacing:0.445px;color:#262E30;font-weight:400">Printer</span>
<span class="t" style="left:21.4px;top:113px;height:21px;line-height:21px;font-size:15px;letter-spacing:0.125px;color:#262E30;font-weight:400">Bambu Lab X1 Carbon 0.4 nozzle</span>
<span class="t" style="left:7.3px;top:145px;height:21px;line-height:21px;font-size:15px;letter-spacing:0.335px;color:#262E30;font-weight:400">Bed type</span>
<span class="t" style="left:110.2px;top:146px;height:21px;line-height:21px;font-size:15px;letter-spacing:0.143px;color:#262E30;font-weight:400">Textured PEI Plate</span>
<span class="t" style="left:33.2px;top:193px;height:21px;line-height:21px;font-size:15px;letter-spacing:0.196px;color:#262E30;font-weight:400">Filament</span>
<span class="t" style="left:171.0px;top:197px;height:15px;line-height:15px;font-size:11px;letter-spacing:0.107px;color:#737B7D;font-weight:400">Flushing volumes</span>
<span class="t" style="left:51.3px;top:243px;height:18px;line-height:18px;font-size:13px;letter-spacing:0.003px;color:#262E30;font-weight:400">Bambu PLA Basic</span>
<span class="t" style="left:261.3px;top:243px;height:18px;line-height:18px;font-size:13px;letter-spacing:0.003px;color:#262E30;font-weight:400">Bambu PLA Basic</span>
<span class="t" style="left:51.3px;top:273px;height:18px;line-height:18px;font-size:13px;letter-spacing:-0.170px;color:#262E30;font-weight:400">3DE Premium PETG</span>
<span class="t" style="left:261.3px;top:273px;height:18px;line-height:18px;font-size:13px;letter-spacing:-0.170px;color:#262E30;font-weight:400">3DE Premium PETG</span>
<span class="t" style="left:51.3px;top:303px;height:18px;line-height:18px;font-size:13px;letter-spacing:-0.170px;color:#262E30;font-weight:400">3DE Premium PETG</span>
<span class="t" style="left:35.2px;top:346px;height:21px;line-height:21px;font-size:15px;letter-spacing:-0.227px;color:#262E30;font-weight:400">Process</span>
<span class="t" style="left:112.0px;top:350px;height:17px;line-height:17px;font-size:12px;letter-spacing:-0.015px;color:#6B6B6B;font-weight:400">Global</span>
<span class="t" style="left:158.0px;top:350px;height:17px;line-height:17px;font-size:12px;letter-spacing:0.145px;color:#fff;font-weight:400">Objects</span>
<span class="t" style="left:271.4px;top:346px;height:21px;line-height:21px;font-size:15px;letter-spacing:-0.039px;color:#262E30;font-weight:400">Advance</span>
<span class="t" style="left:23.1px;top:376px;height:16px;line-height:16px;font-size:11.5px;letter-spacing:0.082px;color:#4A4A4A;font-weight:400">Search plate, object and part.</span>
<span class="t" style="left:4.3px;top:400px;height:18px;line-height:18px;font-size:13px;letter-spacing:0.003px;color:#262E30;font-weight:400">Name</span>
<span class="t" style="left:302.0px;top:400px;height:18px;line-height:18px;font-size:13px;letter-spacing:-0.312px;color:#262E30;font-weight:400">Fila.</span>
<span class="t" style="left:17.1px;top:423px;height:18px;line-height:18px;font-size:13px;letter-spacing:0.002px;color:#262E30;font-weight:400">Plate 1</span>
<span class="t" style="left:25.2px;top:445px;height:18px;line-height:18px;font-size:13px;letter-spacing:-0.886px;color:#262E30;font-weight:400">RFID</span>
<span class="t" style="left:53.3px;top:467px;height:18px;line-height:18px;font-size:13px;letter-spacing:-0.911px;color:#262E30;font-weight:400">RFID</span>
<span class="t" style="left:53.3px;top:489px;height:18px;line-height:18px;font-size:13px;letter-spacing:0.181px;color:#fff;font-weight:400">Material</span>
<span class="t" style="left:53.3px;top:511px;height:18px;line-height:18px;font-size:13px;letter-spacing:0.003px;color:#262E30;font-weight:400">Type</span>
<span class="t" style="left:53.3px;top:533px;height:18px;line-height:18px;font-size:13px;letter-spacing:-0.656px;color:#262E30;font-weight:400">TEMP</span>
<span class="t" style="left:25.2px;top:555px;height:18px;line-height:18px;font-size:13px;letter-spacing:-0.886px;color:#262E30;font-weight:400">RFID</span>
<span class="t" style="left:53.3px;top:577px;height:18px;line-height:18px;font-size:13px;letter-spacing:-0.911px;color:#262E30;font-weight:400">RFID</span>
<span class="t" style="left:53.3px;top:599px;height:18px;line-height:18px;font-size:13px;letter-spacing:0.181px;color:#262E30;font-weight:400">Material</span>
<span class="t" style="left:53.3px;top:621px;height:18px;line-height:18px;font-size:13px;letter-spacing:0.003px;color:#262E30;font-weight:400">Type</span>
<span class="t" style="left:53.3px;top:643px;height:18px;line-height:18px;font-size:13px;letter-spacing:-0.656px;color:#262E30;font-weight:400">TEMP</span>
<span class="t" style="left:17.1px;top:665px;height:18px;line-height:18px;font-size:13px;letter-spacing:0.298px;color:#262E30;font-weight:400">Outside</span>
<span class="t" style="left:11.5px;top:781px;height:21px;line-height:21px;font-size:15px;letter-spacing:-0.046px;color:#2E3436;font-weight:700">Frequent</span>
<span class="t" style="left:345.0px;top:781px;height:21px;line-height:21px;font-size:15px;letter-spacing:0.331px;color:#6B6B6B;font-weight:400">Others</span>
<span class="t" style="left:21.9px;top:820px;height:21px;line-height:21px;font-size:15px;letter-spacing:0.313px;color:#323A3D;font-weight:400">Sparse infill density</span>
<span class="t" style="left:22.0px;top:850px;height:21px;line-height:21px;font-size:15px;letter-spacing:0.316px;color:#323A3D;font-weight:400">Wall loops</span>
<span class="t" style="left:251.0px;top:820px;height:21px;line-height:21px;font-size:15px;letter-spacing:-0.294px;color:#262E30;font-weight:400">15</span>
<span class="t" style="left:266.8px;top:850px;height:21px;line-height:21px;font-size:15px;letter-spacing:-0.144px;color:#262E30;font-weight:400">2</span>
<span class="t" style="left:343.0px;top:826px;height:15px;line-height:15px;font-size:11px;letter-spacing:-0.781px;color:#4A4A4A;font-weight:400">%</span>
<span class="t" style="left:11.5px;top:243px;height:18px;line-height:18px;font-size:12.5px;letter-spacing:0.047px;color:#fff;font-weight:400">1</span>
<span class="t" style="left:221.0px;top:243px;height:18px;line-height:18px;font-size:12.5px;letter-spacing:1.047px;color:#262E30;font-weight:400">2</span>
<span class="t" style="left:11.0px;top:273px;height:18px;line-height:18px;font-size:12.5px;letter-spacing:1.047px;color:#fff;font-weight:400">3</span>
<span class="t" style="left:221.0px;top:273px;height:18px;line-height:18px;font-size:12.5px;letter-spacing:1.047px;color:#fff;font-weight:400">4</span>
<span class="t" style="left:11.0px;top:303px;height:18px;line-height:18px;font-size:12.5px;letter-spacing:1.047px;color:#fff;font-weight:400">5</span>
<span class="t" style="left:310.5px;top:445px;height:18px;line-height:18px;font-size:12.5px;letter-spacing:0.047px;color:#fff;font-weight:400">1</span>
<span class="t" style="left:310.0px;top:467px;height:18px;line-height:18px;font-size:12.5px;letter-spacing:1.047px;color:#262E30;font-weight:400">2</span>
<span class="t" style="left:310.5px;top:489px;height:18px;line-height:18px;font-size:12.5px;letter-spacing:0.047px;color:#fff;font-weight:400">1</span>
<!-- context menu -->
<div class="a" style="left:89px;top:496px;width:235.5px;height:322.6px;background:#F9F9F9;border:1px solid #E3E3E3;border-radius:8px;box-shadow:0 8px 16px rgba(0,0,0,0.16),0 1px 4px rgba(0,0,0,0.10)"></div>
<div class="a" style="left:95.3px;top:521.3px;width:224.2px;height:21.2px;background:#F0F0F0;border-radius:4px"></div>
<div class="a" style="left:98px;top:657.2px;width:217.6px;height:1px;background:#DCDCDC"></div>
<svg width="1789" height="1074" viewBox="0 0 1789 1074" fill="none" stroke-linecap="round" stroke-linejoin="round">
<path d="M304.200 616.200L308.400 620.400L304.200 624.600" stroke="#1A1A1A" stroke-width="1.200"/>
<path d="M304.200 637.600L308.400 641.800L304.200 646" stroke="#A0A0A0" stroke-width="1.100"/>
<path d="M304.200 779.200L308.400 783.400L304.200 787.600" stroke="#1A1A1A" stroke-width="1.200"/>
</svg>

<span class="t" style="left:127.3px;top:502px;height:17px;line-height:17px;font-size:12px;letter-spacing:-0.331px;color:#1A1A1A;font-weight:400">Delete</span>
<span class="t" style="left:282.4px;top:502px;height:17px;line-height:17px;font-size:12px;letter-spacing:-0.639px;color:#1A1A1A;font-weight:400">Del</span>
<span class="t" style="left:127.3px;top:524px;height:17px;line-height:17px;font-size:12px;letter-spacing:-0.235px;color:#1A1A1A;font-weight:400">Edit Text</span>
<span class="t" style="left:127.3px;top:546px;height:17px;line-height:17px;font-size:12px;letter-spacing:-0.168px;color:#1A1A1A;font-weight:400">Fix model</span>
<span class="t" style="left:127.3px;top:568px;height:17px;line-height:17px;font-size:12px;letter-spacing:0.098px;color:#1A1A1A;font-weight:400">Simplify Model</span>
<span class="t" style="left:127.3px;top:590px;height:17px;line-height:17px;font-size:12px;letter-spacing:-0.189px;color:#1A1A1A;font-weight:400">Center</span>
<span class="t" style="left:127.3px;top:612px;height:17px;line-height:17px;font-size:12px;letter-spacing:0.229px;color:#1A1A1A;font-weight:400">Mirror</span>
<span class="t" style="left:127.3px;top:634px;height:17px;line-height:17px;font-size:12px;letter-spacing:-0.129px;color:#A0A0A0;font-weight:400">Split</span>
<span class="t" style="left:127.3px;top:665px;height:17px;line-height:17px;font-size:12px;letter-spacing:-0.124px;color:#1A1A1A;font-weight:400">Change type</span>
<span class="t" style="left:127.3px;top:687px;height:17px;line-height:17px;font-size:12px;letter-spacing:-0.084px;color:#1A1A1A;font-weight:400">Reload from disk</span>
<span class="t" style="left:127.3px;top:709px;height:17px;line-height:17px;font-size:12px;letter-spacing:-0.365px;color:#1A1A1A;font-weight:400">Replace with STL</span>
<span class="t" style="left:127.3px;top:731px;height:17px;line-height:17px;font-size:12px;letter-spacing:0.094px;color:#1A1A1A;font-weight:400">Convert from inch</span>
<span class="t" style="left:127.3px;top:753px;height:17px;line-height:17px;font-size:12px;letter-spacing:0.074px;color:#1A1A1A;font-weight:400">Convert from meter</span>
<span class="t" style="left:127.3px;top:775px;height:17px;line-height:17px;font-size:12px;letter-spacing:-0.126px;color:#1A1A1A;font-weight:400">Change Filament</span>
<span class="t" style="left:127.3px;top:797px;height:17px;line-height:17px;font-size:12px;letter-spacing:-0.166px;color:#1A1A1A;font-weight:400">Edit in Parameter Table</span>
</div>
</body></html>
